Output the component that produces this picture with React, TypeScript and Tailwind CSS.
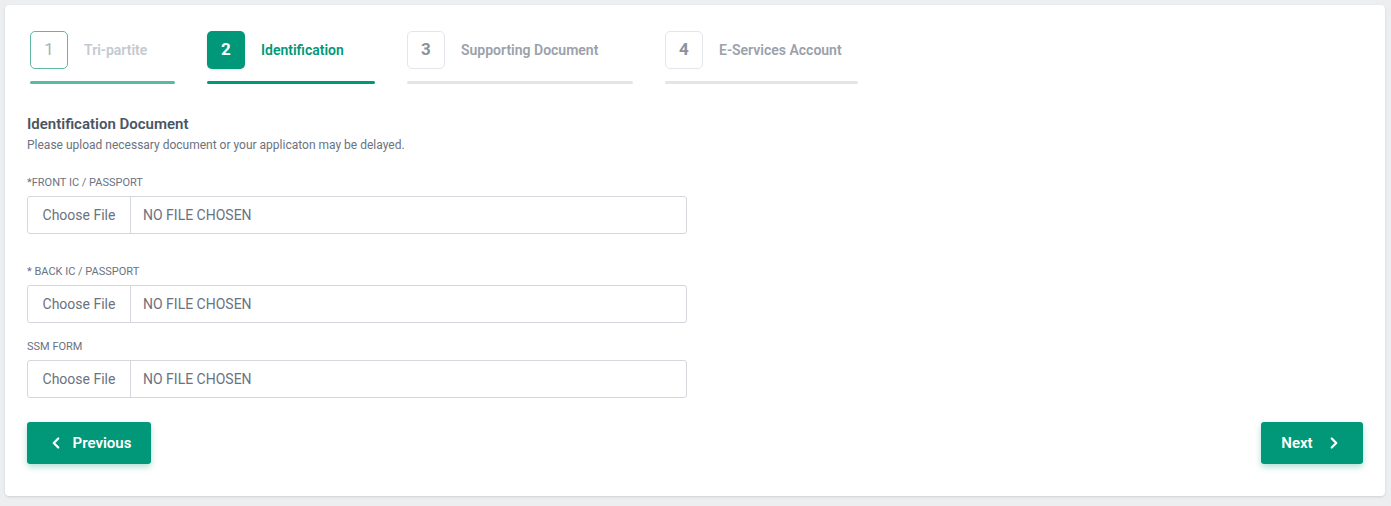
import { ChevronLeft, ChevronRight } from 'lucide-react';

const steps = [
  { n: 1, label: 'Tri-partite', state: 'done', w: 'w-[145px]' },
  { n: 2, label: 'Identification', state: 'active', w: 'w-[168px]' },
  { n: 3, label: 'Supporting Document', state: 'todo', w: 'w-[226px]' },
  { n: 4, label: 'E-Services Account', state: 'todo', w: 'w-[193px]' },
];

const FileField = ({ label }: { label: string }) => (
  <div>
    <div className="text-[11px] text-[#6b7280] uppercase mb-[6px] leading-[14px]">{label}</div>
    <div className="flex w-[660px] h-[38px] border border-[#d4d7dc] rounded-[3px] text-[14px] text-[#6b7280]">
      <div className="w-[103px] border-r border-[#d4d7dc] flex items-center justify-center">Choose File</div>
      <div className="flex items-center px-3">NO FILE CHOSEN</div>
    </div>
  </div>
);

export default function App() {
  return (
    <div className="w-[1391px] h-[506px] bg-[#eceef0] p-[5px] pr-[6px] pb-[10px]" style={{ fontFamily: 'Roboto, "Liberation Sans", sans-serif' }}>
      <div className="bg-white rounded-[4px] h-full px-[22px] pt-[26px] shadow-sm">
        {/* Stepper */}
        <div className="flex gap-[32px] pl-[3px]">
          {steps.map((s) => (
            <div key={s.n} className={`${s.w} flex flex-col`}>
              <div className="flex items-center gap-4 h-[38px]">
                <div
                  className={`w-[38px] h-[38px] rounded-[5px] flex items-center justify-center text-[17px] ${
                    s.state === 'active'
                      ? 'bg-[#009879] text-white font-bold shadow'
                      : s.state === 'done'
                      ? 'border border-[#5cb8a2] text-[#aab2bb]'
                      : 'border border-[#e3e6ea] text-[#8a929c] font-bold'
                  }`}
                >
                  {s.n}
                </div>
                <span
                  className={`text-[14px] font-semibold ${
                    s.state === 'active' ? 'text-[#009879]' : s.state === 'done' ? 'text-[#c4c9cf]' : 'text-[#9aa1aa]'
                  }`}
                >
                  {s.label}
                </span>
              </div>
              <div
                className={`mt-[12px] h-[3px] rounded ${
                  s.state === 'active' ? 'bg-[#009879]' : s.state === 'done' ? 'bg-[#5bb8a3]' : 'bg-[#e3e5e8]'
                }`}
              />
            </div>
          ))}
        </div>

        <div className="mt-[30px]">
          <div className="text-[15px] font-semibold text-[#4b5563] leading-[20px]">Identification Document</div>
          <div className="text-[12px] text-[#6b7280] mt-[2px]">Please upload necessary document or your applicaton may be delayed.</div>
        </div>

        <div className="mt-[22px] flex flex-col gap-[32px]">
          <FileField label="*Front IC / Passport" />
          <div className="-mt-[1px]">
            <FileField label="* Back IC / Passport" />
          </div>
          <div className="-mt-[15px]">
            <FileField label="SSM Form" />
          </div>
        </div>

        <div className="flex justify-between mt-[24px] pr-[0px]">
          <button className="h-[42px] w-[124px] bg-[#009879] text-white text-[15px] font-semibold rounded-[3px] flex items-center justify-center gap-2 shadow-[0_3px_6px_rgba(0,152,121,0.3)]">
            <ChevronLeft size={18} strokeWidth={3} /> Previous
          </button>
          <button className="h-[42px] w-[102px] bg-[#009879] text-white text-[15px] font-semibold rounded-[3px] flex items-center justify-center gap-3 shadow-[0_3px_6px_rgba(0,152,121,0.3)]">
            Next <ChevronRight size={18} strokeWidth={3} />
          </button>
        </div>
      </div>
    </div>
  );
}
